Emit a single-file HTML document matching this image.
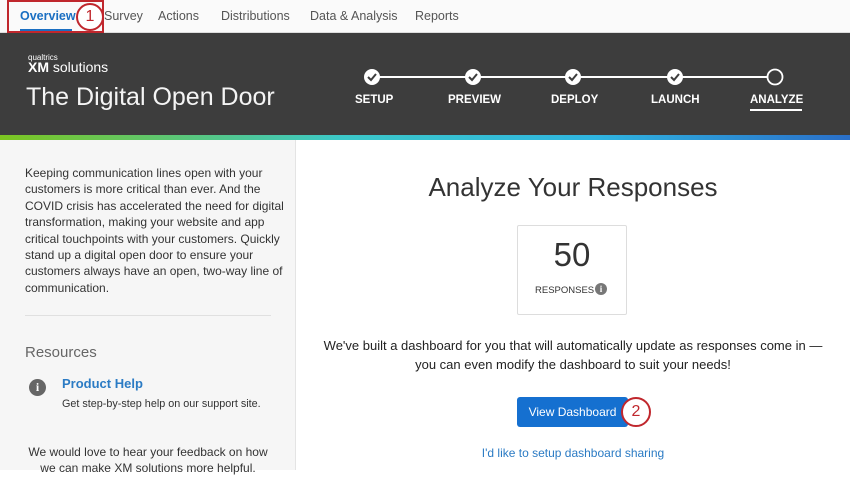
<!DOCTYPE html>
<html><head><style>
*{margin:0;padding:0;box-sizing:border-box}
body{width:850px;height:470px;overflow:hidden;font-family:"Liberation Sans",sans-serif;background:#fff;position:relative}
.a{position:absolute}
.nav{top:0;left:0;width:850px;height:33px;background:#fafafa;border-bottom:1px solid #ddd}
.tab{top:9px;font-size:12.5px;color:#555}
.hdr{top:33px;left:0;width:850px;height:103px;background:#3d3d3d}
.grad{top:135px;left:0;width:850px;height:5px;background:linear-gradient(90deg,#7cc520,#3cc8c8 40%,#2fb5e0 70%,#2a6fc9)}
.step{top:94px;font-size:11.5px;font-weight:bold;color:#fff}
.left{top:140px;left:0;width:296px;height:330px;background:#f6f6f6;border-right:1px solid #e4e4e4}
.p{font-size:12px;line-height:16.4px;color:#333}
</style></head><body>
<div class="a nav"></div>
<div class="a tab" style="left:20px;color:#1a6fc2;font-weight:bold">Overview</div>
<div class="a" style="left:20px;top:29px;width:52px;height:3px;background:#1a6fc2"></div>
<div class="a tab" style="left:104px">Survey</div>
<div class="a tab" style="left:158px">Actions</div>
<div class="a tab" style="left:221px">Distributions</div>
<div class="a tab" style="left:310px">Data &amp; Analysis</div>
<div class="a tab" style="left:415px">Reports</div>
<div class="a" style="left:7px;top:0;width:97px;height:33px;border:2px solid #c0272d"></div>
<div class="a" style="left:76px;top:3px;width:28px;height:28px;border:2px solid #c0272d;border-radius:50%;background:#fff;color:#c0272d;font-size:16px;text-align:center;line-height:24px">1</div>

<div class="a hdr"></div>
<div class="a" style="left:28px;top:53px;font-size:8px;color:#fff">qualtrics</div>
<div class="a" style="left:28px;top:59px;font-size:14px;color:#fff"><b>XM</b><span style="font-weight:300"> solutions</span></div>
<div class="a" style="left:26px;top:83px;font-size:25px;color:#f4f4f4">The Digital Open Door</div>
<div class="a" style="left:372px;top:76px;width:403px;height:2px;background:#fff"></div>
<svg class="a" style="left:0;top:0" width="850" height="140">
<g fill="#fff">
<circle cx="372" cy="77" r="8"/><circle cx="473" cy="77" r="8"/><circle cx="573" cy="77" r="8"/><circle cx="675" cy="77" r="8"/></g>
<g fill="none" stroke="#3d3d3d" stroke-width="2"><path d="M368 77l3 3 5-6M469 77l3 3 5-6M569 77l3 3 5-6M671 77l3 3 5-6"/></g>
<circle cx="775" cy="77" r="7.5" fill="#3d3d3d" stroke="#fff" stroke-width="1.8"/>
</svg>
<div class="a step" style="left:355px">SETUP</div>
<div class="a step" style="left:448px">PREVIEW</div>
<div class="a step" style="left:551px">DEPLOY</div>
<div class="a step" style="left:651px">LAUNCH</div>
<div class="a step" style="left:750px">ANALYZE</div>
<div class="a" style="left:750px;top:109px;width:52px;height:2px;background:#fff"></div>
<div class="a grad"></div>

<div class="a left"></div>
<div class="a p" style="left:25px;top:165px;width:262px">Keeping communication lines open with your customers is more critical than ever. And the COVID crisis has accelerated the need for digital transformation, making your website and app critical touchpoints with your customers. Quickly stand up a digital open door to ensure your customers always have an open, two-way line of communication.</div>
<div class="a" style="left:25px;top:315px;width:246px;height:1px;background:#e0e0e0"></div>
<div class="a" style="left:25px;top:344px;font-size:15px;color:#666">Resources</div>
<div class="a" style="left:29px;top:379px;width:17px;height:17px;border-radius:50%;background:#666;color:#fff;font-size:12px;font-weight:bold;text-align:center;line-height:17px;font-family:'Liberation Serif',serif">i</div>
<div class="a" style="left:62px;top:376px;font-size:13px;font-weight:bold;color:#2b7bc4">Product Help</div>
<div class="a" style="left:62px;top:398px;font-size:10.8px;color:#333">Get step-by-step help on our support site.</div>
<div class="a p" style="left:0;width:296px;text-align:center;top:444px">We would love to hear your feedback on how<br>we can make XM solutions more helpful.</div>

<div class="a" style="left:296px;width:554px;top:172px;text-align:center;font-size:26px;color:#333">Analyze Your Responses</div>
<div class="a" style="left:517px;top:225px;width:110px;height:90px;border:1px solid #ddd;border-radius:2px"></div>
<div class="a" style="left:517px;top:236px;width:110px;text-align:center;font-size:33px;color:#333">50</div>
<div class="a" style="left:535px;top:285px;font-size:9.5px;color:#333">RESPONSES</div>
<div class="a" style="left:595px;top:283px;width:12px;height:12px;border-radius:50%;background:#777;color:#fff;font-size:9px;font-weight:bold;text-align:center;line-height:12px;font-family:'Liberation Serif',serif">i</div>
<div class="a" style="left:296px;width:554px;top:336px;text-align:center;font-size:13px;line-height:19px;color:#222">We've built a dashboard for you that will automatically update as responses come in —<br>you can even modify the dashboard to suit your needs!</div>
<div class="a" style="left:517px;top:397px;width:111px;height:30px;background:#1570d0;border-radius:3px;color:#fff;font-size:12px;text-align:center;line-height:30px">View Dashboard</div>
<div class="a" style="left:621px;top:397px;width:30px;height:30px;border:2px solid #c0272d;border-radius:50%;background:#fff;color:#c0272d;font-size:16px;text-align:center;line-height:26px">2</div>
<div class="a" style="left:296px;width:554px;top:446px;text-align:center;font-size:12px;color:#2b7bc4">I'd like to setup dashboard sharing</div>
</body></html>
